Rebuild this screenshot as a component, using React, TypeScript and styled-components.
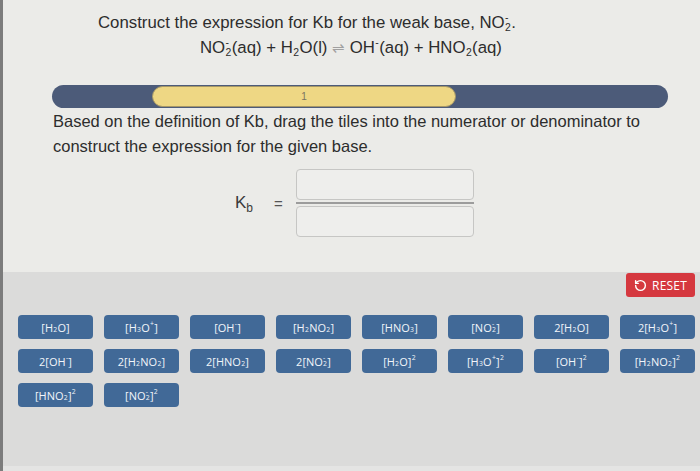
import styled, { createGlobalStyle } from 'styled-components';
import { RotateCcw } from 'lucide-react';

const GlobalStyle = createGlobalStyle`
  html, body {
    margin: 0;
    padding: 0;
    background: #ebebe8;
  }
  body {
    font-family: "Liberation Sans", Arial, sans-serif;
    color: #2b2b2b;
  }
`;

// charge + subscript stacked over each other, like NO₂⁻
const Ion = ({ sub, charge }: { sub?: string; charge?: string }) => (
  <IonStack>
    <span>{charge ?? '\u00a0'}</span>
    <span>{sub ?? '\u00a0'}</span>
  </IonStack>
);

const tiles: React.ReactNode[] = [
  <>[H<Ion sub="2" />O]</>,
  <>[H<Ion sub="3" />O<Ion charge="+" />]</>,
  <>[OH<Ion charge="-" />]</>,
  <>[H<Ion sub="2" />NO<Ion sub="2" />]</>,
  <>[HNO<Ion sub="3" />]</>,
  <>[NO<Ion sub="2" charge="-" />]</>,
  <>2[H<Ion sub="2" />O]</>,
  <>2[H<Ion sub="3" />O<Ion charge="+" />]</>,
  <>2[OH<Ion charge="-" />]</>,
  <>2[H<Ion sub="2" />NO<Ion sub="2" />]</>,
  <>2[HNO<Ion sub="2" />]</>,
  <>2[NO<Ion sub="2" charge="-" />]</>,
  <>[H<Ion sub="2" />O]<Ion charge="2" /></>,
  <>[H<Ion sub="3" />O<Ion charge="+" />]<Ion charge="2" /></>,
  <>[OH<Ion charge="-" />]<Ion charge="2" /></>,
  <>[H<Ion sub="2" />NO<Ion sub="2" />]<Ion charge="2" /></>,
  <>[HNO<Ion sub="2" />]<Ion charge="2" /></>,
  <>[NO<Ion sub="2" charge="-" />]<Ion charge="2" /></>,
];

export default function App() {
  return (
    <>
      <GlobalStyle />
      <Page>
        <Question>
          <Title>
            Construct the expression for Kb for the weak base, NO<Ion sub="2" charge="-" />.
          </Title>
          <Equation>
            NO<Ion sub="2" charge="-" />(aq) + H<Ion sub="2" />O(l) <Arrow>⇌</Arrow> OH<Ion charge="-" />(aq) + HNO<Ion sub="2" />(aq)
          </Equation>
          <Progress>
            <ProgressFill>1</ProgressFill>
          </Progress>
          <Prompt>
            Based on the definition of Kb, drag the tiles into the numerator or denominator to
            construct the expression for the given base.
          </Prompt>
          <Expression>
            <Symbol>
              K<small>b</small>
            </Symbol>
            <Equals>=</Equals>
            <Fraction>
              <DropBox />
              <FractionBar />
              <DropBox />
            </Fraction>
          </Expression>
        </Question>
        <Tray>
          <TrayHead>
            <ResetButton>
              <RotateCcw size={13} strokeWidth={2.6} />
              RESET
            </ResetButton>
          </TrayHead>
          <TileGrid>
            {tiles.map((t, i) => (
              <TileButton key={i}>{t}</TileButton>
            ))}
          </TileGrid>
        </Tray>
        <Footer />
      </Page>
    </>
  );
}

const Page = styled.div`
  width: 700px;
  height: 471px;
  box-sizing: border-box;
  border-left: 3px solid #7c7c7c;
  display: flex;
  flex-direction: column;
  overflow: hidden;
`;

const Question = styled.div`
  height: 272px;
  display: flex;
  flex-direction: column;
`;

const Title = styled.div`
  margin: 11px 0 0 95px;
  font-size: 16.8px;
  line-height: 24px;
  color: #2d2d2d;
`;

const Equation = styled.div`
  margin: 2px 0 0 197px;
  font-size: 16.8px;
  line-height: 22px;
  color: #2d2d2d;
`;

const Arrow = styled.span`
  color: #a0a0a0;
  font-size: 15px;
`;

const IonStack = styled.span`
  display: inline-flex;
  flex-direction: column;
  vertical-align: 0.66em;
  font-size: 0.62em;
  line-height: 0.95;
  margin: 0 0.04em;
`;

const Progress = styled.div`
  margin: 26px 0 0 49px;
  width: 616px;
  height: 23px;
  border-radius: 12px;
  background: #4c5b79;
  display: flex;
  align-items: center;
  padding-left: 100px;
  box-sizing: border-box;
`;

const ProgressFill = styled.div`
  width: 304px;
  height: 21px;
  box-sizing: border-box;
  border-radius: 11px;
  background: #eed784;
  border: 1px solid #a69766;
  display: flex;
  align-items: center;
  justify-content: center;
  font-size: 10px;
  color: #7a7361;
`;

const Prompt = styled.div`
  margin: 1px 0 0 50px;
  width: 630px;
  font-size: 16.5px;
  line-height: 25px;
  color: #2d2d2d;
`;

const Expression = styled.div`
  margin: 10px 0 0 232px;
  display: flex;
  align-items: center;
`;

const Symbol = styled.div`
  font-size: 17px;
  color: #3a3a3a;
  small {
    font-size: 12px;
    position: relative;
    top: 4px;
  }
`;

const Equals = styled.div`
  margin: 0 13px 0 21px;
  font-size: 15px;
  color: #555;
`;

const Fraction = styled.div`
  display: flex;
  flex-direction: column;
  gap: 2px;
`;

const DropBox = styled.div`
  width: 178px;
  height: 31px;
  box-sizing: border-box;
  border: 1px solid #c6c6c4;
  border-radius: 4px;
  background: #eeeeec;
`;

const FractionBar = styled.div`
  height: 2px;
  background: #9c9c9c;
`;

const Tray = styled.div`
  flex: 1;
  background: #dbdbda;
  display: flex;
  flex-direction: column;
  padding: 0 5px 0 15px;
`;

const TrayHead = styled.div`
  display: flex;
  justify-content: flex-end;
  height: 42px;
  padding-top: 1px;
`;

const ResetButton = styled.button`
  height: 24px;
  padding: 0 8px;
  display: flex;
  align-items: center;
  gap: 5px;
  border: none;
  border-radius: 3px;
  background: #d5383f;
  color: #fff;
  font-family: "Open Sans", sans-serif;
  font-size: 12px;
  letter-spacing: 0.2px;
`;

const TileGrid = styled.div`
  display: grid;
  grid-template-columns: repeat(8, 75px);
  column-gap: 11px;
  row-gap: 10px;
`;

const TileButton = styled.div`
  height: 24px;
  border-radius: 4px;
  background: #416997;
  color: #f2f5fa;
  font-family: "Open Sans", sans-serif;
  font-size: 11px;
  display: flex;
  align-items: center;
  justify-content: center;
  white-space: nowrap;
`;

const Footer = styled.div`
  height: 5px;
  background: #e4e4e3;
`;
